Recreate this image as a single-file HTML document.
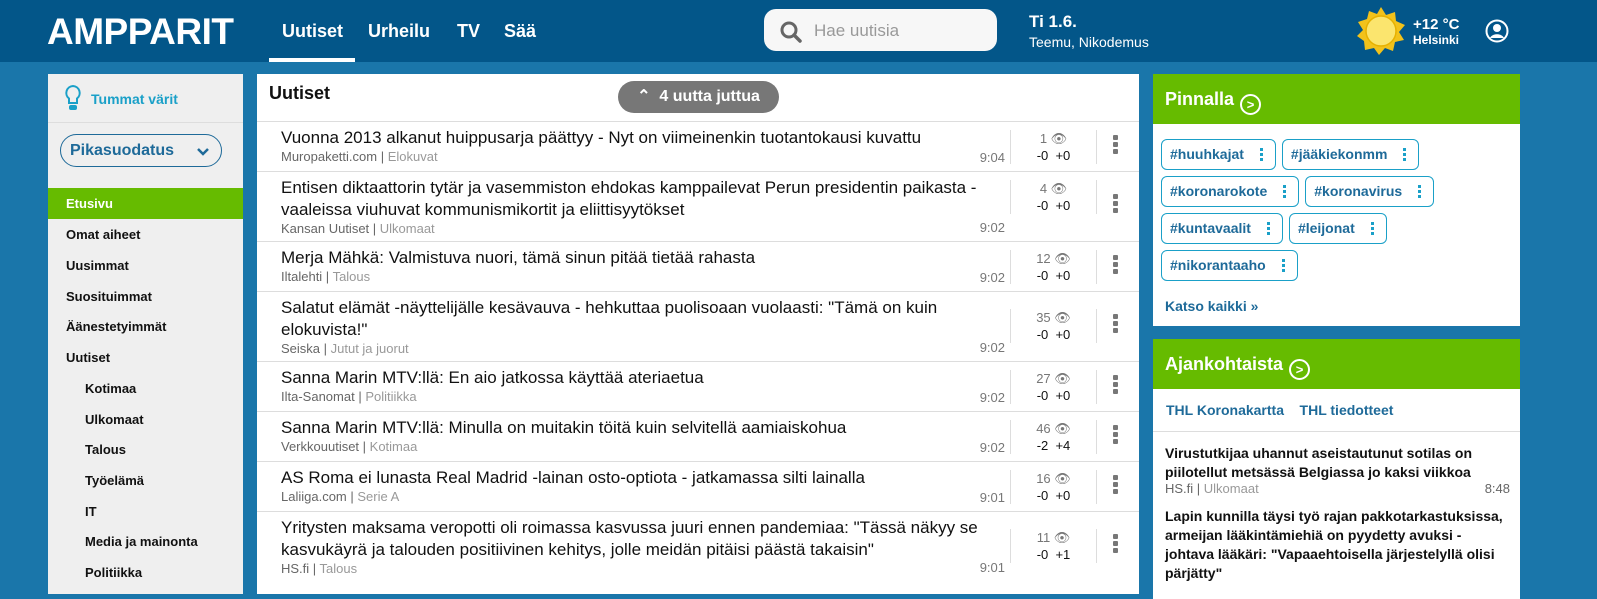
<!DOCTYPE html><html><head><meta charset="utf-8"><style>
*{box-sizing:border-box;margin:0;padding:0}
body{width:1597px;height:587px;overflow:hidden;background:#1a76aa;font-family:"Liberation Sans",sans-serif;position:relative}
.hdr{position:absolute;left:0;top:0;width:1597px;height:62px;background:#035689;color:#fff}
.abs{position:absolute}
.logo{left:47px;top:11px;font-size:37px;font-weight:bold;letter-spacing:-0.5px}
.nav{top:21px;font-size:18px;font-weight:bold}
.search{left:764px;top:9px;width:233px;height:42px;background:#f7f7f7;border-radius:12px}
.left{left:48px;top:74px;width:195px;height:520px;background:#efefef}
.mid{left:257px;top:74px;width:882px;height:520px;background:#fff}
.right{left:1153px;top:74px;width:367px;background:#fff}
.mi{position:absolute;left:0;width:195px;height:31px;line-height:31px;font-size:13px;font-weight:bold;color:#111;padding-left:18px}
.sub{padding-left:37px}
.row{position:absolute;left:0;width:882px;border-top:1px solid #ddd}
.t{position:absolute;left:24px;top:5px;width:720px;font-size:17px;line-height:22px;color:#111}
.s{font-size:13px;color:#666;line-height:16px}
.s span{color:#999}
.tm{position:absolute;right:134px;font-size:13px;color:#777}
.st{position:absolute;left:753px;top:8px;width:87px;height:34px;border-left:1px solid #ddd;border-right:1px solid #ddd;text-align:center;font-size:13px;line-height:17px;color:#111}
.st .v{color:#777}
.dots{position:absolute;left:856px;width:5px}
.dots i{display:block;width:5px;height:5px;background:#777;margin-bottom:2px;border-radius:1px}
.tags{position:absolute;left:8px;top:65px;width:355px;display:flex;flex-wrap:wrap;gap:6px 6px}
.tag{border:1px solid #1aa0c8;border-radius:6px;height:31px;line-height:29px;padding:0 12px 0 8px;font-weight:bold;font-size:14px;color:#1e6a99;display:flex;align-items:center}
.tag b{display:inline-block;width:3px;height:13px;margin-left:16px;background:linear-gradient(#1aa0c8 0 3px,transparent 3px 5px,#1aa0c8 5px 8px,transparent 8px 10px,#1aa0c8 10px 13px)}
.gh{height:50px;background:#66bb00;color:#fff;font-size:18px;font-weight:bold;line-height:50px;padding-left:12px}
.circ{display:inline-block;width:21px;height:21px;border:2px solid #fff;border-radius:50%;vertical-align:-4px;margin-left:6px;font-size:13px;line-height:17px;text-align:center}
</style></head><body>
<div class="hdr">
<div class="abs logo">AMPPARIT</div>
<div class="abs nav" style="left:282px">Uutiset</div>
<div class="abs" style="left:269px;top:58px;width:86px;height:4px;background:#fff"></div>
<div class="abs nav" style="left:368px">Urheilu</div>
<div class="abs nav" style="left:457px">TV</div>
<div class="abs nav" style="left:504px">Sää</div>
<div class="abs search"><svg style="position:absolute;left:15px;top:11px" width="24" height="24" viewBox="0 0 24 24"><circle cx="10" cy="10" r="7" fill="none" stroke="#666" stroke-width="3"/><path d="M15 15l6 6" stroke="#666" stroke-width="3.5" stroke-linecap="round"/></svg><span style="position:absolute;left:50px;top:12px;font-size:17px;color:#999">Hae uutisia</span></div>
<div class="abs" style="left:1029px;top:12px;font-size:17px;font-weight:bold">Ti 1.6.</div>
<div class="abs" style="left:1029px;top:34px;font-size:14px">Teemu, Nikodemus</div>
<svg class="abs" style="left:1355px;top:5px" width="52" height="52" viewBox="0 0 52 52"><polygon points="26,2 31,10 40,7 41,16 50,20 44,27 49,35 40,37 38,46 30,43 24,50 19,43 10,45 9,36 2,31 8,25 3,17 12,14 14,6 22,9" fill="#f2c21b"/><circle cx="26" cy="26" r="15" fill="#fbe56e" stroke="#e7b100" stroke-width="1.5"/></svg>
<div class="abs" style="left:1413px;top:17px;font-size:15px;font-weight:bold;line-height:15px">+12 °C<br><span style="font-size:12px">Helsinki</span></div>
<svg class="abs" style="left:1485px;top:19px" width="24" height="24" viewBox="0 0 24 24"><circle cx="12" cy="12" r="10.5" fill="none" stroke="#fff" stroke-width="2"/><circle cx="12" cy="9" r="4" fill="#fff"/><path d="M5 19c2-5 12-5 14 0" fill="#fff"/></svg>
</div>

<div class="abs left">
<svg class="abs" style="left:16px;top:10px" width="18" height="28" viewBox="0 0 18 28"><path d="M9 2a7 7 0 0 0-4 12.5V19h8v-4.5A7 7 0 0 0 9 2z" fill="none" stroke="#1aa0c8" stroke-width="2"/><rect x="5" y="21" width="8" height="5" rx="2" fill="#1aa0c8"/></svg>
<div class="abs" style="left:43px;top:17px;font-size:14px;font-weight:bold;color:#1aa0c8">Tummat värit</div>
<div class="abs" style="left:0;top:48px;width:195px;height:1px;background:#ddd"></div>
<div class="abs" style="left:12px;top:60px;width:162px;height:33px;border:1px solid #1e6a99;border-radius:17px;font-size:16px;font-weight:bold;color:#1e6a99;line-height:31px;padding-left:9px">Pikasuodatus<svg style="position:absolute;left:136px;top:13px" width="12" height="8" viewBox="0 0 12 8"><path d="M1 1l5 5 5-5" fill="none" stroke="#1e6a99" stroke-width="2.5"/></svg></div>
<div class="mi" style="top:114px;background:#66bb00;color:#fff">Etusivu</div>
<div class="mi" style="top:145px">Omat aiheet</div>
<div class="mi" style="top:176px">Uusimmat</div>
<div class="mi" style="top:207px">Suosituimmat</div>
<div class="mi" style="top:237px">Äänestetyimmät</div>
<div class="mi" style="top:268px">Uutiset</div>
<div class="mi sub" style="top:299px">Kotimaa</div>
<div class="mi sub" style="top:330px">Ulkomaat</div>
<div class="mi sub" style="top:360px">Talous</div>
<div class="mi sub" style="top:391px">Työelämä</div>
<div class="mi sub" style="top:422px">IT</div>
<div class="mi sub" style="top:452px">Media ja mainonta</div>
<div class="mi sub" style="top:483px">Politiikka</div>
</div>

<div class="abs mid">
<div class="abs" style="left:12px;top:9px;font-size:18px;font-weight:bold;color:#111">Uutiset</div>
<div class="abs" style="left:361px;top:7px;width:161px;height:32px;background:#777;border-radius:16px;color:#fff;font-size:16px;font-weight:bold;line-height:32px;text-align:center">&#8963;&nbsp; 4 uutta juttua</div>

<div class="row" style="top:47px;height:50px"><div class="t">Vuonna 2013 alkanut huippusarja päättyy - Nyt on viimeinenkin tuotantokausi kuvattu<div class="s">Muropaketti.com | <span>Elokuvat</span></div></div><div class="tm" style="top:28px">9:04</div><div class="st"><span class="v">1 👁</span><br>-0 &nbsp;+0</div><div class="dots" style="top:13px"><i></i><i></i><i></i></div></div>
<div class="row" style="top:97px;height:70px"><div class="t">Entisen diktaattorin tytär ja vasemmiston ehdokas kamppailevat Perun presidentin paikasta - vaaleissa viuhuvat kommunismikortit ja eliittisyytökset<div class="s">Kansan Uutiset | <span>Ulkomaat</span></div></div><div class="tm" style="top:48px">9:02</div><div class="st"><span class="v">4 👁</span><br>-0 &nbsp;+0</div><div class="dots" style="top:22px"><i></i><i></i><i></i></div></div>
<div class="row" style="top:167px;height:50px"><div class="t">Merja Mähkä: Valmistuva nuori, tämä sinun pitää tietää rahasta<div class="s">Iltalehti | <span>Talous</span></div></div><div class="tm" style="top:28px">9:02</div><div class="st"><span class="v">12 👁</span><br>-0 &nbsp;+0</div><div class="dots" style="top:13px"><i></i><i></i><i></i></div></div>
<div class="row" style="top:217px;height:70px"><div class="t">Salatut elämät -näyttelijälle kesävauva - hehkuttaa puolisoaan vuolaasti: "Tämä on kuin elokuvista!"<div class="s">Seiska | <span>Jutut ja juorut</span></div></div><div class="tm" style="top:48px">9:02</div><div class="st" style="top:17px"><span class="v">35 👁</span><br>-0 &nbsp;+0</div><div class="dots" style="top:22px"><i></i><i></i><i></i></div></div>
<div class="row" style="top:287px;height:50px"><div class="t">Sanna Marin MTV:llä: En aio jatkossa käyttää ateriaetua<div class="s">Ilta-Sanomat | <span>Politiikka</span></div></div><div class="tm" style="top:28px">9:02</div><div class="st"><span class="v">27 👁</span><br>-0 &nbsp;+0</div><div class="dots" style="top:13px"><i></i><i></i><i></i></div></div>
<div class="row" style="top:337px;height:50px"><div class="t">Sanna Marin MTV:llä: Minulla on muitakin töitä kuin selvitellä aamiaiskohua<div class="s">Verkkouutiset | <span>Kotimaa</span></div></div><div class="tm" style="top:28px">9:02</div><div class="st"><span class="v">46 👁</span><br>-2 &nbsp;+4</div><div class="dots" style="top:13px"><i></i><i></i><i></i></div></div>
<div class="row" style="top:387px;height:50px"><div class="t">AS Roma ei lunasta Real Madrid -lainan osto-optiota - jatkamassa silti lainalla<div class="s">Laliiga.com | <span>Serie A</span></div></div><div class="tm" style="top:28px">9:01</div><div class="st"><span class="v">16 👁</span><br>-0 &nbsp;+0</div><div class="dots" style="top:13px"><i></i><i></i><i></i></div></div>
<div class="row" style="top:437px;height:70px"><div class="t">Yritysten maksama veropotti oli roimassa kasvussa juuri ennen pandemiaa: "Tässä näkyy se kasvukäyrä ja talouden positiivinen kehitys, jolle meidän pitäisi päästä takaisin"<div class="s">HS.fi | <span>Talous</span></div></div><div class="tm" style="top:48px">9:01</div><div class="st" style="top:17px"><span class="v">11 👁</span><br>-0 &nbsp;+1</div><div class="dots" style="top:22px"><i></i><i></i><i></i></div></div>
</div>

<div class="abs right" style="height:252px">
<div class="gh">Pinnalla<span class="circ">&gt;</span></div>
<div class="tags">
<div class="tag">#huuhkajat<b></b></div>
<div class="tag">#jääkiekonmm<b></b></div>
<div class="tag">#koronarokote<b></b></div>
<div class="tag">#koronavirus<b></b></div>
<div class="tag">#kuntavaalit<b></b></div>
<div class="tag">#leijonat<b></b></div>
<div class="tag">#nikorantaaho<b></b></div>
</div>
<div class="abs" style="left:12px;top:224px;font-size:14px;font-weight:bold;color:#1e6a99">Katso kaikki »</div>
</div>
<div class="abs right" style="top:339px;height:260px">
<div class="gh">Ajankohtaista<span class="circ">&gt;</span></div>
<div class="abs" style="left:13px;top:63px;font-size:14px;font-weight:bold;color:#1e6a99">THL Koronakartta &nbsp;&nbsp; THL tiedotteet</div>
<div class="abs" style="left:0;top:92px;width:367px;height:1px;background:#ddd"></div>
<div class="abs" style="left:12px;top:105px;width:345px;font-size:14px;font-weight:bold;line-height:19px;color:#111">Virustutkijaa uhannut aseistautunut sotilas on piilotellut metsässä Belgiassa jo kaksi viikkoa</div>
<div class="abs s" style="left:12px;top:142px;width:345px">HS.fi | <span>Ulkomaat</span><span style="float:right;color:#666">8:48</span></div>
<div class="abs" style="left:12px;top:168px;width:345px;font-size:14px;font-weight:bold;line-height:19px;color:#111">Lapin kunnilla täysi työ rajan pakkotarkastuksissa, armeijan lääkintämiehiä on pyydetty avuksi - johtava lääkäri: "Vapaaehtoisella järjestelyllä olisi pärjätty"</div>
</div>
</body></html>
